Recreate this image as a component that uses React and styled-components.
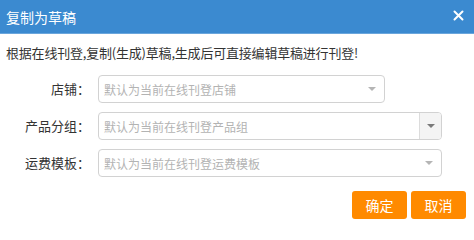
import React from "react";
import styled, { createGlobalStyle } from "styled-components";

const GlobalStyle = createGlobalStyle`
  html, body {
    margin: 0;
    padding: 0;
    background: #fff;
  }
  body {
    font-family: "Noto Sans CJK SC", "Noto Sans", "Liberation Sans", sans-serif;
  }
`;

const Dialog = styled.div`
  width: 474px;
  height: 225px;
  background: #fff;
  display: flex;
  flex-direction: column;
  overflow: hidden;
`;

const Header = styled.div`
  height: 33px;
  background: #3b8ad0;
  border-bottom: 1px solid #6aa6dc;
  display: flex;
  align-items: center;
  justify-content: space-between;
  padding: 0 10px 0 6px;
  color: #fff;
`;

const Title = styled.div`
  font-size: 14px;
  line-height: 20px;
`;

const Close = styled.span`
  display: flex;
  align-items: center;
  margin-top: -2px;
`;

const Intro = styled.div`
  margin: 9px 0 0 6px;
  font-size: 13px;
  line-height: 20px;
  color: #333;
  letter-spacing: -0.2px;
`;

const Form = styled.div`
  margin-top: 12px;
  display: flex;
  flex-direction: column;
  gap: 9px;
`;

const Row = styled.div`
  display: flex;
  align-items: center;
  gap: 8px;
`;

const Label = styled.div`
  width: 90px;
  text-align: right;
  font-size: 13px;
  line-height: 20px;
  color: #333;
  white-space: nowrap;
`;

const Select = styled.div`
  width: ${(p) => p.$w}px;
  height: 28px;
  box-sizing: border-box;
  border: 1px solid #d2d2d2;
  border-radius: 4px;
  display: flex;
  align-items: stretch;
  overflow: hidden;
`;

const Placeholder = styled.div`
  flex: 1;
  display: flex;
  align-items: center;
  padding-left: 5px;
  font-size: 12px;
  color: #b3b3b3;
`;

const Caret = styled.div`
  width: ${(p) => (p.$addon ? 21 : 24)}px;
  display: flex;
  align-items: center;
  justify-content: center;
  background: ${(p) => (p.$addon ? "#f4f4f4" : "transparent")};
  border-left: ${(p) => (p.$addon ? "1px solid #dcdcdc" : "none")};
  &::after {
    content: "";
    border-left: 4px solid transparent;
    border-right: 4px solid transparent;
    border-top: 4px solid ${(p) => (p.$addon ? "#7a7a7a" : "#b5b5b5")};
  }
`;

const Actions = styled.div`
  margin-top: 14px;
  padding-right: 8px;
  display: flex;
  justify-content: flex-end;
  gap: 4px;
`;

const Button = styled.button`
  width: 55px;
  height: 28px;
  border: none;
  border-radius: 3px;
  background: #ff8a00;
  color: #fff;
  font-family: inherit;
  font-size: 14px;
  padding: 0;
  cursor: pointer;
`;

const fields = [
  { label: "店铺：", text: "默认为当前在线刊登店铺", w: 287 },
  { label: "产品分组：", text: "默认为当前在线刊登产品组", w: 344, addon: true },
  { label: "运费模板：", text: "默认为当前在线刊登运费模板", w: 344 },
];

export default function App() {
  return (
    <>
      <GlobalStyle />
      <Dialog>
        <Header>
          <Title>复制为草稿</Title>
          <Close>
            <svg width="11" height="11" viewBox="0 0 11 11">
              <path d="M1.5 1.5 L9.5 9.5 M9.5 1.5 L1.5 9.5" stroke="#fff" strokeWidth="2" strokeLinecap="round" />
            </svg>
          </Close>
        </Header>
        <Intro>根据在线刊登,复制(生成)草稿,生成后可直接编辑草稿进行刊登!</Intro>
        <Form>
          {fields.map((f) => (
            <Row key={f.label}>
              <Label>{f.label}</Label>
              <Select $w={f.w}>
                <Placeholder>{f.text}</Placeholder>
                <Caret $addon={f.addon} />
              </Select>
            </Row>
          ))}
        </Form>
        <Actions>
          <Button>确定</Button>
          <Button>取消</Button>
        </Actions>
      </Dialog>
    </>
  );
}
